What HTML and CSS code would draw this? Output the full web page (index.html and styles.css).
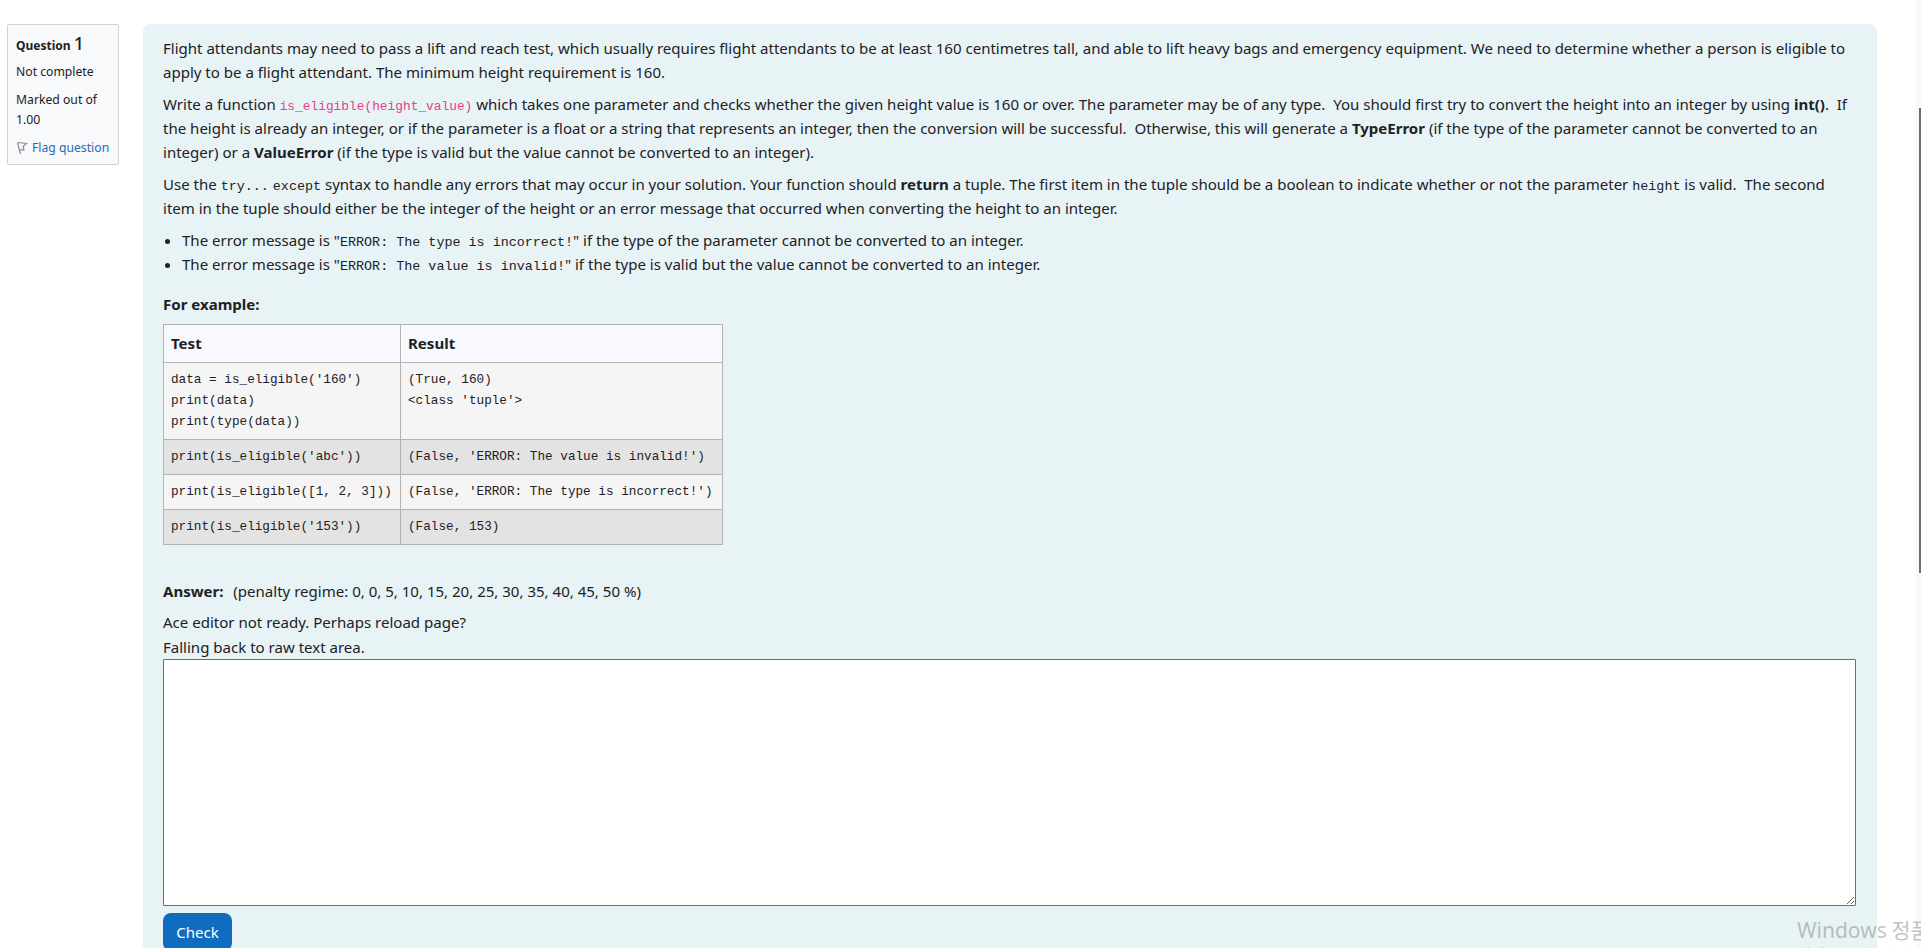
FILE: index.html
```html
<!DOCTYPE html>
<html lang="en">
<head>
<meta charset="utf-8">
<title>Question 1</title>
<link rel="stylesheet" href="styles.css">
</head>
<body>
<div class="rail"></div>
<div class="thumb"></div>
<main class="page">
  <aside class="info">
    <h3 class="qno">Question <span class="num">1</span></h3>
    <div class="state">Not complete</div>
    <div class="grade">Marked out of 1.00</div>
    <div class="flag">
      <svg class="flag-icon" viewBox="0 0 12 14" width="12" height="14" aria-hidden="true"><path d="M1.5 1.5 L4.5 13 M1.5 1.5 L10.5 2.5 L7 5.5 L8 9 L3.4 8.6" fill="none" stroke="#8a8f94" stroke-width="1.2"/></svg>
      <a href="#">Flag question</a>
    </div>
  </aside>
  <section class="content">
    <p>Flight attendants may need to pass a lift and reach test, which usually requires flight attendants to be at least 160 centimetres tall, and able to lift heavy bags and emergency equipment. We need to determine whether a person is eligible to apply to be a flight attendant. The minimum height requirement is 160.</p>
    <p>Write a function <code class="pink">is_eligible(height_value)</code> which takes one parameter and checks whether the given height value is 160 or over. The parameter may be of any type.&nbsp; You should first try to convert the height into an integer by using <b>int()</b>.&nbsp; If the height is already an integer, or if the parameter is a float or a string that represents an integer, then the conversion will be successful.&nbsp; Otherwise, this will generate a <b>TypeError</b> (if the type of the parameter cannot be converted to an integer) or a <b>ValueError</b> (if the type is valid but the value cannot be converted to an integer).</p>
    <p>Use the <span class="tt">try...</span> <span class="tt">except</span> syntax to handle any errors that may occur in your solution. Your function should <b>return</b> a tuple. The first item in the tuple should be a boolean to indicate whether or not the parameter <span class="tt">height</span> is valid.&nbsp; The second item in the tuple should either be the integer of the height or an error message that occurred when converting the height to an integer.</p>
    <ul>
      <li>The error message is "<span class="tt">ERROR: The type is incorrect!</span>" if the type of the parameter cannot be converted to an integer.</li>
      <li>The error message is "<span class="tt">ERROR: The value is invalid!</span>" if the type is valid but the value cannot be converted to an integer.</li>
    </ul>
    <h4 class="example">For example:</h4>
    <table class="cases">
      <thead><tr><th>Test</th><th>Result</th></tr></thead>
      <tbody>
        <tr><td><pre>data = is_eligible('160')
print(data)
print(type(data))</pre></td><td><pre>(True, 160)
&lt;class 'tuple'&gt;</pre></td></tr>
        <tr><td><pre>print(is_eligible('abc'))</pre></td><td><pre>(False, 'ERROR: The value is invalid!')</pre></td></tr>
        <tr><td><pre>print(is_eligible([1, 2, 3]))</pre></td><td><pre>(False, 'ERROR: The type is incorrect!')</pre></td></tr>
        <tr><td><pre>print(is_eligible('153'))</pre></td><td><pre>(False, 153)</pre></td></tr>
      </tbody>
    </table>
    <p class="answer"><b class="answer-label">Answer:</b>&nbsp; (penalty regime: 0, 0, 5, 10, 15, 20, 25, 30, 35, 40, 45, 50 %)</p>
    <div class="notice">Ace editor not ready. Perhaps reload page?<br>Falling back to raw text area.</div>
    <textarea class="editor"></textarea>
    <button class="check" type="button">Check</button>
  </section>
</main>
<div class="watermark">Windows 정품 인증<br><span class="wm-sub">설정으로 이동하여 Windows를 정품 인증합니다.</span></div>
</body>
</html>
```
FILE: styles.css
```css
* { box-sizing: border-box; }
html, body { margin: 0; height: 948px; overflow: hidden; background: #fff; }
body { font-family: "Noto Sans", "Noto Sans CJK KR", sans-serif; font-size: 15.04px; line-height: 24px; color: #1d2125; }
.page { display: flex; align-items: flex-start; gap: 24px; padding: 24px 44px 0 7px; }
.info { flex: 0 0 112px; height: 141px; background: #f8f9fa; border: 1px solid #ced4da; border-radius: 2px; padding: 6px 8px; font-size: 12.2px; line-height: 20px; }
.qno { margin: 0 0 4px; font-size: 12px; font-weight: 700; line-height: 24px; }
.num { font-size: 18px; font-weight: 500; }
.state { margin-bottom: 8px; }
.grade { margin-bottom: 8px; }
.flag { display: flex; align-items: center; gap: 4px; white-space: nowrap; }
.flag a { color: #2a6ab8; text-decoration: none; }
.flag-icon { flex: none; }
.content { flex: 1; height: 940px; background: #e7f3f5; border-radius: 8px; padding: 12px 20px 0; }
p { margin: 0 0 8px; }
code, .tt, pre { font-family: "Liberation Mono", monospace; }
code, .tt { line-height: 1; }
.pink { color: #e83e8c; font-size: 12.85px; }
.tt { font-size: 13.4px; }
ul { margin: 0 0 16px; padding-left: 19px; }
.example { margin: 0 0 8px; font-size: 15.04px; font-weight: 700; line-height: 24px; }
.cases { border-collapse: collapse; margin: 0; width: 560px; table-layout: fixed; }
.cases th:first-child { width: 237px; }
.cases th, .cases td { border: 1px solid #b3b3b3; padding: 6px 6px 7px 7px; text-align: left; vertical-align: top; }
.cases th { background: #f8f9ff; font-weight: 700; height: 38px; }
.cases tbody tr:nth-child(odd) { background: #f5f5f5; }
.cases tbody tr:nth-child(even) { background: #e3e3e3; }
pre { margin: 0; font-size: 12.7px; line-height: 21px; color: #1d2125; }
.answer { margin: 34px 0 0; }
.answer-label { margin-right: 2px; }
.notice { line-height: 24.5px; height: 49px; margin-top: 7px; }
.editor { display: block; width: 1693px; height: 247px; margin: 0; background: #fff; border: 1px solid #6a6f75; border-radius: 1px; }
.check { display: block; width: 69px; height: 38px; margin-top: 7px; background: #0f6cbf; color: #fff; border: 0; border-radius: 8px; font: inherit; }
.rail { position: absolute; top: 0; right: 0; width: 5px; height: 948px; background: #f8f9fa; }
.thumb { position: absolute; top: 108px; right: 0; width: 2px; height: 465px; background: #6a6f75; }
.watermark { position: absolute; right: 0; top: 919px; width: 124px; height: 29px; overflow: hidden; color: rgba(120,120,120,.45); font-size: 21px; line-height: 22px; white-space: nowrap; word-spacing: -1px; }
.wm-sub { font-size: 15px; word-spacing: 0; }
```
